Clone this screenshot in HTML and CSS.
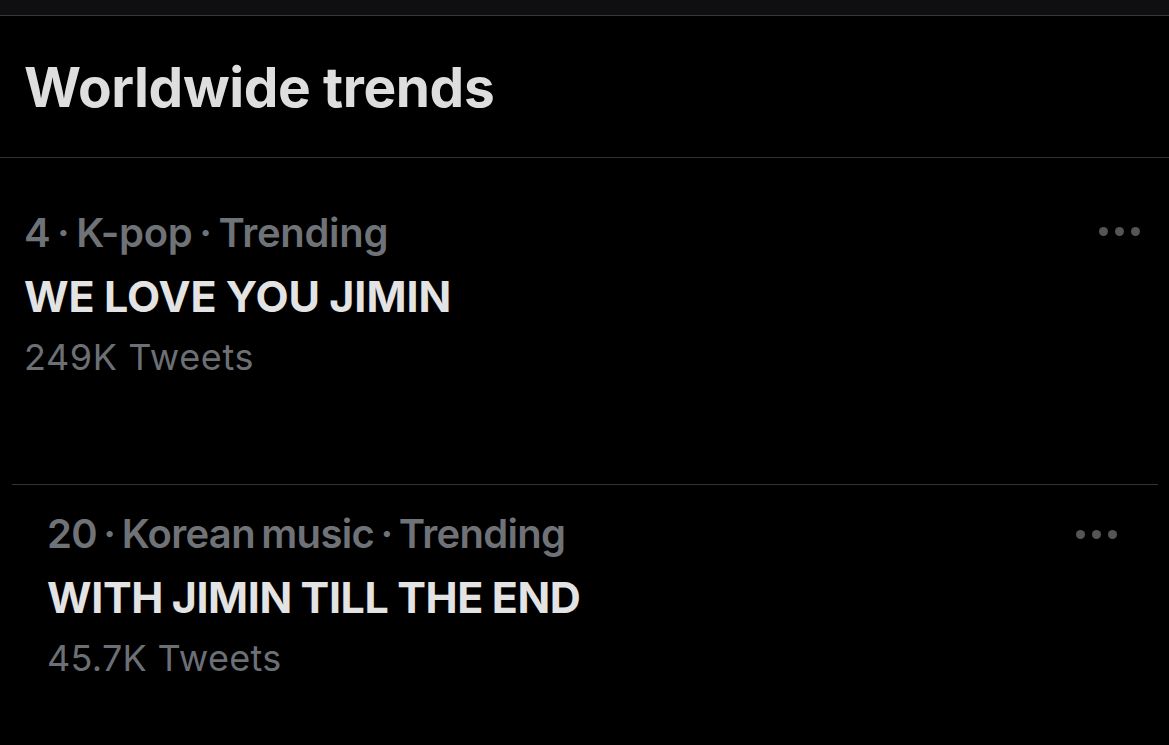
FILE: index.html
```html
<!DOCTYPE html>
<html>
<head>
    <title>Worldwide trends</title>
    <link rel="stylesheet" href="styles.css">
</head>
<body>
    <div class="top-bar"></div>

    <header class="trends-header">
        <h1>Worldwide trends</h1>
    </header>

    <section class="trend trend-first">
        <div class="trend-text">
            <div class="trend-meta">4 · K-pop · Trending</div>
            <div class="trend-name">WE LOVE YOU JIMIN</div>
            <div class="trend-count">249K Tweets</div>
        </div>
        <div class="more" aria-label="More">
            <span></span><span></span><span></span>
        </div>
    </section>

    <section class="trend trend-second">
        <div class="trend-text">
            <div class="trend-meta">20 · Korean music · Trending</div>
            <div class="trend-name">WITH JIMIN TILL THE END</div>
            <div class="trend-count">45.7K Tweets</div>
        </div>
        <div class="more" aria-label="More">
            <span></span><span></span><span></span>
        </div>
    </section>
</body>
</html>
```

FILE: styles.css
```css
body {
    font-family: Inter, Roboto, "Liberation Sans", sans-serif;
    margin: 0;
    padding: 0;
    background-color: #000;
    color: #e1e1e1;
    min-height: 100vh;
    overflow: hidden;
}

.top-bar {
    height: 15px;
    background-color: #0f0f11;
    border-bottom: 1px solid #363638;
}

.trends-header {
    padding: 43px 24px 42px;
    border-bottom: 1px solid #2f3033;
}

.trends-header h1 {
    margin: 0;
    font-size: 55px;
    line-height: 56px;
    font-weight: 700;
    color: #dedede;
    letter-spacing: -0.4px;
}

.trend {
    display: flex;
    justify-content: space-between;
    align-items: flex-start;
}

.trend-first {
    padding: 43px 29px 98px 24px;
}

.trend-second {
    margin: 0 11px 0 12px;
    padding: 17px 41px 0 35px;
    border-top: 1px solid #333336;
}

.trend-meta {
    font-size: 40px;
    line-height: 64px;
    font-weight: 600;
    color: #6f7378;
    letter-spacing: -0.3px;
    word-spacing: -3px;
}

.trend-name {
    font-size: 43px;
    line-height: 63px;
    font-weight: 700;
    color: #e3e3e3;
    word-spacing: -1px;
}

.trend-count {
    font-size: 36px;
    line-height: 58px;
    font-weight: 400;
    color: #6c7075;
    letter-spacing: 0.6px;
}

/* second card was captured a touch narrower */
.trend-second .trend-meta {
    letter-spacing: -0.7px;
}

.trend-second .trend-name {
    letter-spacing: -0.4px;
}

.trend-second .trend-count {
    letter-spacing: 0.3px;
}

.more {
    display: flex;
    gap: 7px;
    padding-top: 26px;
}

.trend-second .more {
    padding-top: 28px;
}

.more span {
    width: 9px;
    height: 9px;
    border-radius: 50%;
    background-color: #545557;
}
```
